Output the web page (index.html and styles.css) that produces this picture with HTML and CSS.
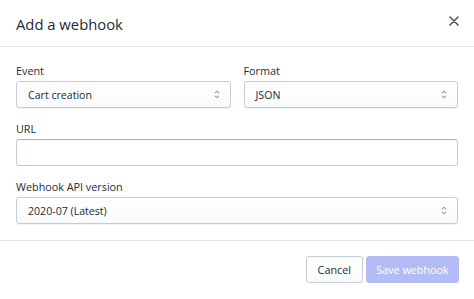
FILE: index.html
```html
<!DOCTYPE html>
<html lang="en">
<head>
    <meta charset="UTF-8">
    <title>Add a webhook</title>
    <link rel="stylesheet" href="styles.css">
</head>
<body>
    <div class="modal">
        <div class="modal-header">
            <h2>Add a webhook</h2>
            <button class="close-btn" aria-label="Close">
                <svg width="10" height="10" viewBox="0 0 10 10"><path d="M1 1L9 9M9 1L1 9" stroke="#454f5b" stroke-width="1.5" stroke-linecap="round"/></svg>
            </button>
        </div>

        <div class="modal-body">
            <div class="row">
                <div class="field">
                    <label>Event</label>
                    <div class="select">
                        <span>Cart creation</span>
                        <svg class="arrows" width="6" height="9" viewBox="0 0 6 9"><path d="M1 3.2L3 1.2L5 3.2M1 5.8L3 7.8L5 5.8" fill="none" stroke="#919eab" stroke-width="1.1"/></svg>
                    </div>
                </div>
                <div class="field">
                    <label>Format</label>
                    <div class="select">
                        <span>JSON</span>
                        <svg class="arrows" width="6" height="9" viewBox="0 0 6 9"><path d="M1 3.2L3 1.2L5 3.2M1 5.8L3 7.8L5 5.8" fill="none" stroke="#919eab" stroke-width="1.1"/></svg>
                    </div>
                </div>
            </div>

            <div class="field">
                <label>URL</label>
                <input type="text" class="text-input">
            </div>

            <div class="field last">
                <label>Webhook API version</label>
                <div class="select">
                    <span>2020-07 (Latest)</span>
                    <svg class="arrows" width="6" height="9" viewBox="0 0 6 9"><path d="M1 3.2L3 1.2L5 3.2M1 5.8L3 7.8L5 5.8" fill="none" stroke="#919eab" stroke-width="1.1"/></svg>
                </div>
            </div>
        </div>

        <div class="modal-footer">
            <button class="btn">Cancel</button>
            <button class="btn btn-primary" disabled>Save webhook</button>
        </div>
    </div>
</body>
</html>
```

FILE: styles.css
```css
body {
    margin: 0;
    background: #fff;
    font-family: 'Open Sans', 'Noto Sans', sans-serif;
    color: #212b36;
}
.modal {
    width: 474px;
}
.modal-header {
    height: 46px;
    display: flex;
    align-items: center;
    justify-content: space-between;
    padding: 0 13px 0 16px;
    border-bottom: 1px solid #dfe3e8;
}
.modal-header h2 {
    margin: 0;
    font-size: 14.8px;
    font-weight: 400;
    padding-top: 2px;
}
.close-btn {
    background: none;
    border: none;
    padding: 2px;
    margin-top: -4px;
    display: flex;
    cursor: pointer;
}
.modal-body {
    padding: 14px 16px 16px 16px;
    border-bottom: 1px solid #dfe3e8;
}
.row {
    display: flex;
    gap: 13px;
}
.row .field {
    flex: 1;
}
.field {
    margin-bottom: 11px;
}
.field.last {
    margin-bottom: 0;
}
.field label {
    display: block;
    font-size: 10.8px;
    line-height: 20px;
    color: #212b36;
}
.select {
    height: 25px;
    border: 1px solid #c4cdd5;
    border-radius: 3px;
    background: linear-gradient(#fff, #f9fafb);
    box-shadow: 0 1px 0 rgba(22, 29, 37, 0.05);
    display: flex;
    align-items: center;
    justify-content: space-between;
    padding: 0 10px 0 11px;
    font-size: 10.6px;
}
.arrows {
    display: block;
}
.text-input {
    display: block;
    box-sizing: border-box;
    width: 100%;
    height: 27px;
    border: 1px solid #c4cdd5;
    border-top-color: #aeb4b9;
    border-radius: 3px;
    box-shadow: inset 0 1px 0 rgba(99, 115, 129, 0.05);
    margin: 0;
}
.modal-footer {
    display: flex;
    justify-content: flex-end;
    gap: 3px;
    padding: 15px 15px 0 0;
}
.btn {
    height: 27px;
    padding: 0 11px;
    border: 1px solid #c4cdd5;
    border-radius: 3px;
    background: linear-gradient(#fff, #f9fafb);
    box-shadow: 0 1px 0 rgba(22, 29, 37, 0.05);
    font-family: inherit;
    font-size: 10.8px;
    color: #212b36;
    white-space: nowrap;
    cursor: pointer;
}
.btn-primary {
    border-color: #b3bcf5;
    background: #b3bcf5;
    color: #fff;
    box-shadow: none;
    width: 93px;
    padding: 0;
}
```
